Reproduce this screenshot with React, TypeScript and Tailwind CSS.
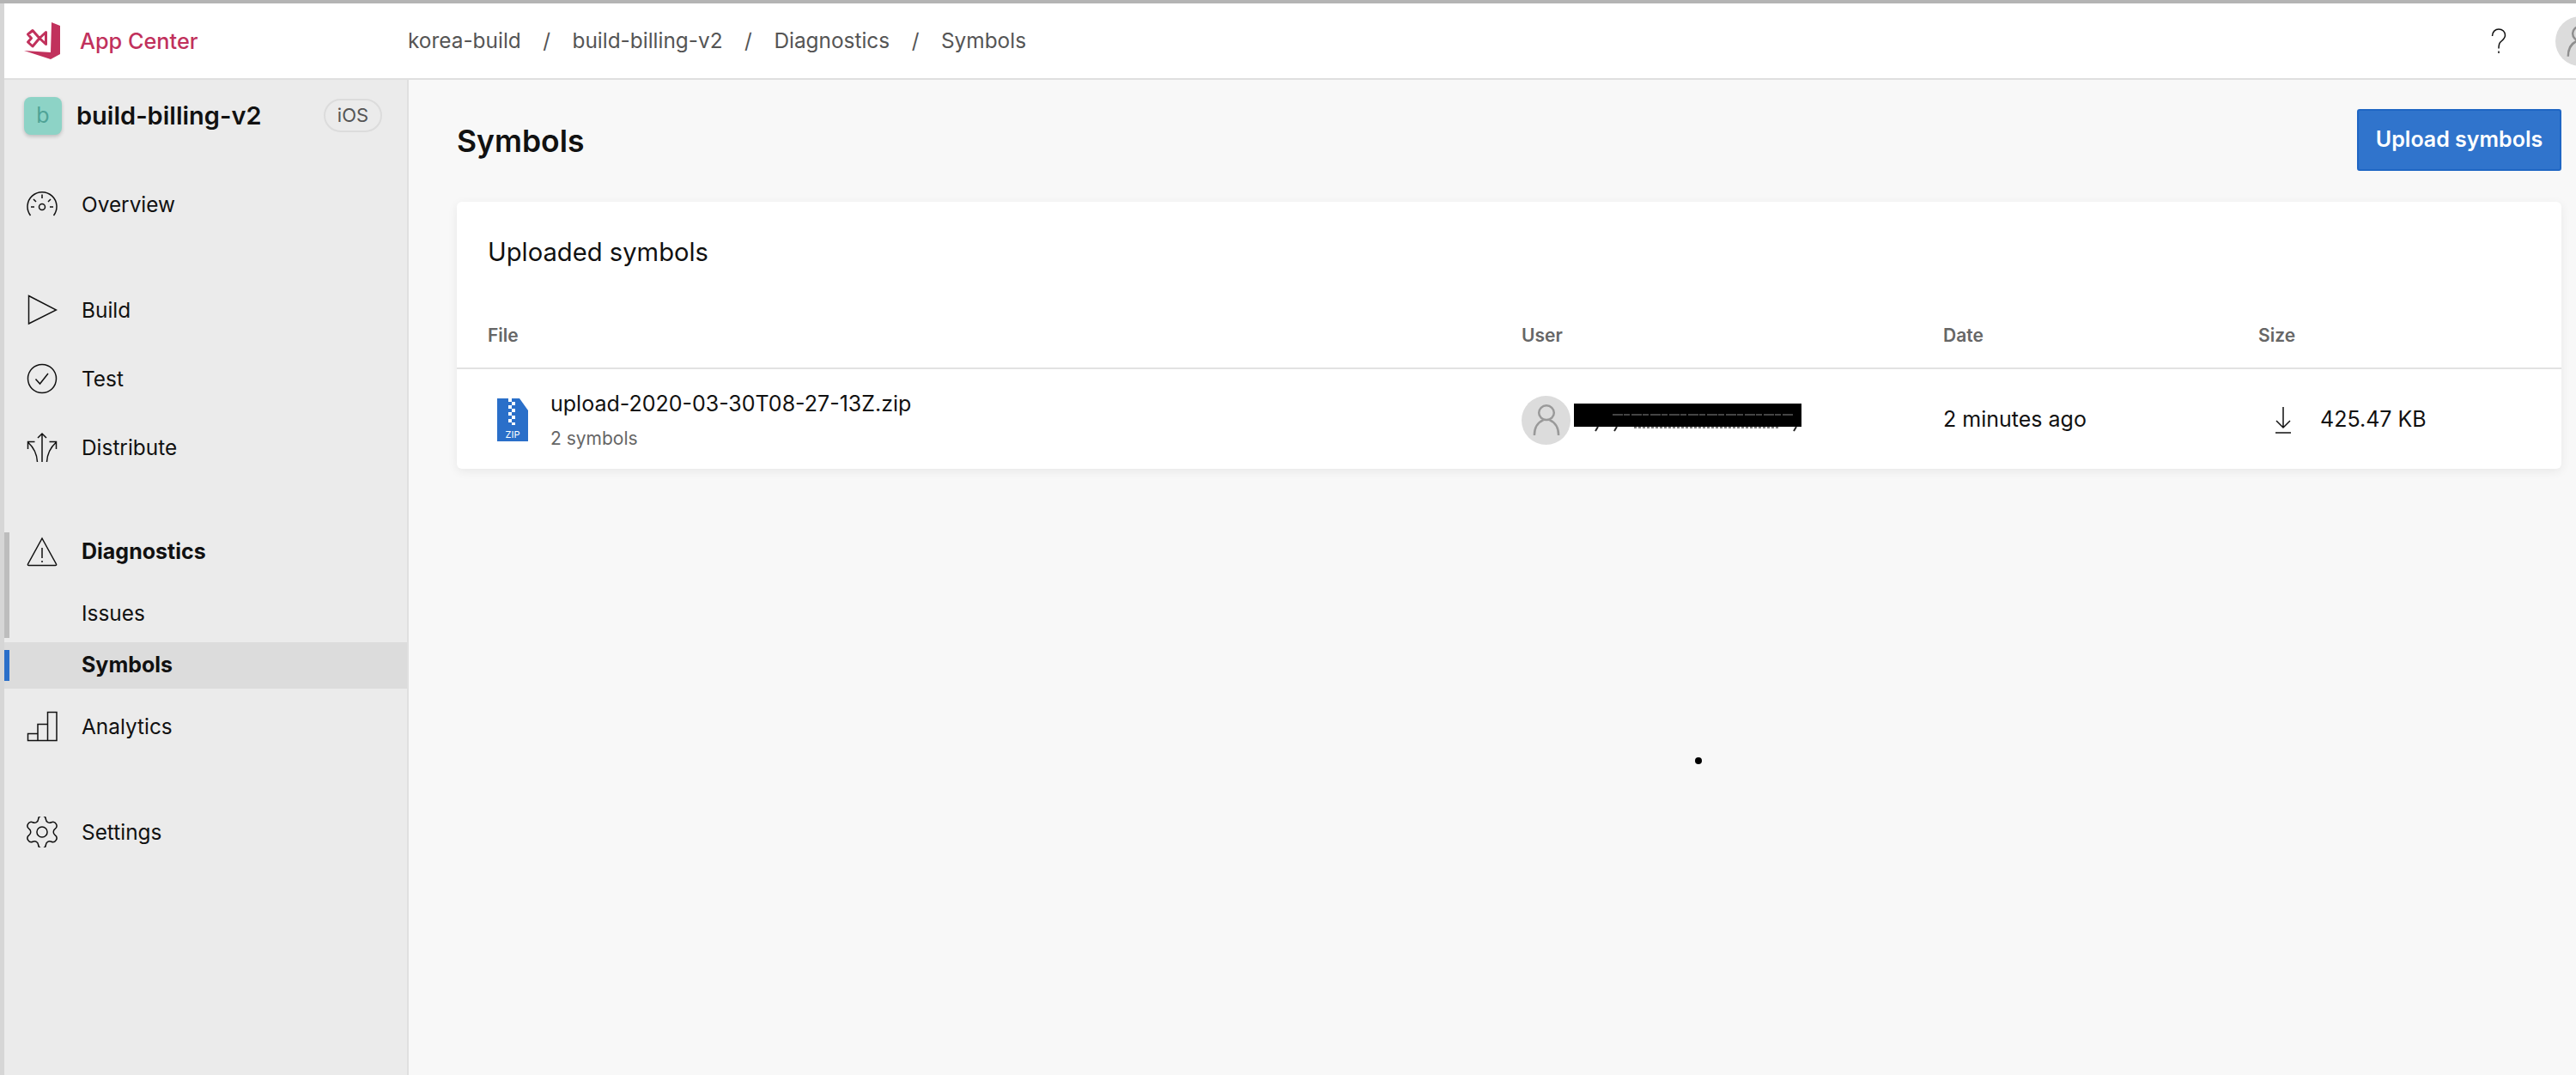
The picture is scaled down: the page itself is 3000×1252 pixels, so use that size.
import React from "react";

const ico = "w-[36px] h-[36px] shrink-0 text-[#111]";

const GaugeIcon = () => (
  <svg viewBox="0 0 36 36" fill="none" stroke="currentColor" strokeWidth="1.5" className={ico}>
    <path d="M4.500 31A17 17 0 1 1 31.500 31" />
    <circle cx="18" cy="21" r="3.500" />
    <path d="M18 6.500v4.500M5 21h4M27 21h4M8 12l3 3M28 12l-3 3" />
  </svg>
);

const PlayIcon = () => (
  <svg viewBox="0 0 36 36" fill="none" stroke="currentColor" strokeWidth="1.500" className={ico}>
    <path d="M2.500 1.500 L34.500 18 L2.500 34 Z" />
  </svg>
);

const CheckIcon = () => (
  <svg viewBox="0 0 36 36" fill="none" stroke="currentColor" strokeWidth="1.500" className={ico}>
    <circle cx="18" cy="18" r="16.500" />
    <path d="M10.500 18.500 L15.500 24 L25 12" />
  </svg>
);

const DistributeIcon = () => (
  <svg viewBox="0 0 36 36" fill="none" stroke="currentColor" strokeWidth="1.500" className={ico}>
    <path d="M18 35V2M13 7l5-5 5 5" />
    <path d="M12.500 35C12 25 7 17 1.500 12M1.500 20v-8.500h8" />
    <path d="M23.500 35C24 25 29 17 34.500 12M34.500 20v-8.500h-8" />
  </svg>
);

const WarningIcon = () => (
  <svg viewBox="0 0 36 36" fill="none" stroke="currentColor" strokeWidth="1.500" className={ico}>
    <path d="M18 2 L34.500 32 Q35 33.500 33.500 33.500 H2.500 Q1 33.500 1.500 32 Z" />
    <path d="M18 13v12M18 28v2" />
  </svg>
);

const BarsIcon = () => (
  <svg viewBox="0 0 36 36" fill="none" stroke="currentColor" strokeWidth="1.500" className={ico}>
    <path d="M1.500 26.500h11.500v8h-11.500zM13 15.500h11.500v19h-11.500zM24.500 1.500h10.500v33h-10.500z" />
  </svg>
);

const GearIcon = () => (
  <svg viewBox="2.500 2.500 19 19" fill="none" stroke="currentColor" strokeWidth="0.8" className={ico}>
    <path d="M9.671 4.136a2.34 2.34 0 0 1 4.659 0 2.34 2.34 0 0 0 3.319 1.915 2.34 2.34 0 0 1 2.33 4.033 2.34 2.34 0 0 0 0 3.831 2.34 2.34 0 0 1-2.33 4.033 2.34 2.34 0 0 0-3.319 1.915 2.34 2.34 0 0 1-4.659 0 2.34 2.34 0 0 0-3.32-1.915 2.34 2.34 0 0 1-2.33-4.033 2.34 2.34 0 0 0 0-3.831A2.34 2.34 0 0 1 6.35 6.051a2.34 2.34 0 0 0 3.319-1.915" />
    <circle cx="12" cy="12" r="3.200" />
  </svg>
);

const PersonIcon = ({ className }: { className: string }) => (
  <svg viewBox="0 0 36 42" fill="none" stroke="currentColor" strokeWidth="2.800" className={className}>
    <ellipse cx="18" cy="11" rx="10" ry="9.500" />
    <path d="M2 41 C2 29 8 23 14 20.500 M34 41 C34 29 28 23 22 20.500" />
  </svg>
);

const Logo = () => (
  <svg viewBox="0 0 44 44" className="w-[44px] h-[44px] text-[#c1315c]">
    <path fill="currentColor" d="M32 0 L42 4 V37 L31 43 L0 33 L31 35 Z" />
    <path
      fill="none"
      stroke="currentColor"
      strokeWidth="3"
      strokeLinejoin="round"
      d="M10 9.500 L4.500 14 L8.500 18.500 L4.500 23 L10 28 L18 18.500 Z M18 18.500 L25.500 11.500 V25.500 Z"
    />
  </svg>
);

const ZipIcon = () => (
  <svg viewBox="0 0 36 50" className="w-[36px] h-[50px] shrink-0">
    <path fill="#2a6fc9" d="M0 0 H26 L36 14 V50 H0 Z" />
    <path fill="#fff" d="M13 0h4v4h-4zM17 4h4v4h-4zM13 8h4v4h-4zM17 12h4v4h-4zM13 16h4v4h-4zM17 20h4v4h-4zM13 24h4v4h-4zM17 28h4v3h-4z" />
    <text x="18" y="46" textAnchor="middle" fontSize="11" fill="#fff" fontFamily="Inter, sans-serif">
      ZIP
    </text>
  </svg>
);

const Redaction = () => (
  <svg viewBox="0 0 265 33" className="w-[265px] h-[33px] shrink-0 mb-[5px]">
    <rect width="265" height="27" fill="#000" />
    <path stroke="#444" strokeWidth="2" strokeDasharray="12 1 7 2" d="M45 13H255" />
    <path fill="none" stroke="#222" strokeWidth="2" d="M28 27 L25 32 M50 27 L47 32 M259 27 L256 32" />
    <path stroke="#555" strokeWidth="1.500" strokeDasharray="3 2" d="M70 28H240" />
  </svg>
);

const NavRow = ({
  icon,
  label,
  className,
}: {
  icon: React.ReactNode;
  label: string;
  className: string;
}) => (
  <div className={`flex items-center gap-[28px] pl-[26px] ${className}`}>
    {icon}
    <span>{label}</span>
  </div>
);

const crumbs = ["korea-build", "build-billing-v2", "Diagnostics", "Symbols"];

export default function App() {
  return (
    <div className="relative w-[3000px] h-[1252px] overflow-hidden flex flex-col bg-[#f8f8f8] text-[#111] font-['Inter',sans-serif]">
      <div className="h-[4px] shrink-0 bg-[#b4b4b4]" />
      <div className="flex flex-1 min-h-0">
        <div className="w-[5px] shrink-0 bg-[#d6d6d6]" />
        <div className="flex-1 min-w-0 flex flex-col">
          <header className="h-[89px] shrink-0 flex items-center bg-white border-b-2 border-[#dfdfdf] overflow-hidden">
            <div className="w-[470px] shrink-0 flex items-center pl-[23px] gap-[21px]">
              <Logo />
              <span className="text-[25.3px] font-medium text-[#c1315c]">App Center</span>
            </div>
            <nav className="flex items-center text-[24.4px] text-[#555]">
              {crumbs.map((c, i) => (
                <React.Fragment key={c}>
                  {i > 0 && <span className="mx-[25.5px]">/</span>}
                  <span>{c}</span>
                </React.Fragment>
              ))}
            </nav>
            <div className="ml-auto flex items-center gap-[57px] -mr-[34px]">
              <svg viewBox="0 0 18 30" fill="none" stroke="#111" strokeWidth="1.500" className="w-[18px] h-[30px]">
                <path d="M1.500 9C1.500 4 5 1 9 1 C13.500 1 16.500 4 16.500 8 C16.500 12 13 14 11 16 C9.500 17.500 9 19 9 23.500M9 26.500v2.500" />
              </svg>
              <div className="w-[58px] h-[58px] rounded-full bg-[#dcdcdc] flex items-center justify-center">
                <PersonIcon className="w-[32px] h-[38px] text-[#8e8e8e]" />
              </div>
            </div>
          </header>
          <div className="flex flex-1 min-h-0">
            <aside className="w-[471px] shrink-0 bg-[#ebebeb] border-r-2 border-[#e0e0e0] text-[24.4px]">
              <div className="flex items-center h-[43px] mt-[20px] pl-[23px] pr-[29px]">
                <div className="w-[44px] h-[44px] rounded-[8px] bg-[#8dd3c6] shadow-[0_2px_4px_rgba(0,0,0,0.2)] flex items-center justify-center text-[#4fa396] text-[25px]">
                  b
                </div>
                <span className="ml-[17px] text-[29px] font-semibold">build-billing-v2</span>
                <span className="ml-auto w-[68px] h-[39px] rounded-full border-2 border-[#dcdcdc] flex items-center justify-center text-[22px] text-[#555]">
                  iOS
                </span>
              </div>
              <NavRow icon={<GaugeIcon />} label="Overview" className="h-[80px] mt-[42px]" />
              <NavRow icon={<PlayIcon />} label="Build" className="h-[80px] mt-[43px]" />
              <NavRow icon={<CheckIcon />} label="Test" className="h-[80px]" />
              <NavRow icon={<DistributeIcon />} label="Distribute" className="h-[80px]" />
              <div className="relative mt-[59px]">
                <div className="absolute left-0 top-0 w-[6px] h-[123px] bg-[#bdbdbd]" />
                <NavRow
                  icon={<WarningIcon />}
                  label="Diagnostics"
                  className="h-[46px] text-[25px] font-bold"
                />
                <div className="h-[54px] mt-[21px] flex items-center pl-[90px]">Issues</div>
                <div className="relative h-[54px] mt-[7px] flex items-center pl-[90px] text-[25px] font-bold bg-[#dcdcdc]">
                  <div className="absolute left-0 top-[9px] w-[6px] h-[36px] bg-[#2a6fc9]" />
                  Symbols
                </div>
              </div>
              <NavRow icon={<BarsIcon />} label="Analytics" className="h-[80px] mt-[4px]" />
              <NavRow icon={<GearIcon />} label="Settings" className="h-[80px] mt-[43px]" />
            </aside>
            <main className="flex-1 min-w-0 pl-[56px] pr-[17px]">
              <div className="flex items-center justify-between h-[72px] mt-[34px]">
                <h1 className="pt-[3px] text-[35.5px] font-semibold">Symbols</h1>
                <button className="w-[238px] h-[72px] rounded-[3px] border-2 border-[#1f66c4] bg-[#3074cc] text-white text-[25px] font-semibold">
                  Upload symbols
                </button>
              </div>
              <section className="mt-[36px] h-[311px] rounded-[6px] bg-white shadow-[0_3px_12px_rgba(0,0,0,0.07)]">
                <h2 className="h-[117px] pl-[36px] flex items-center text-[29.2px]">Uploaded symbols</h2>
                <div className="grid grid-cols-[1204px_491px_367px_1fr] h-[78px] pl-[36px] pt-[2px] items-center border-b-2 border-[#e2e2e2] text-[21px] font-semibold text-[#666]">
                  <span>File</span>
                  <span>User</span>
                  <span>Date</span>
                  <span>Size</span>
                </div>
                <div className="grid grid-cols-[1204px_491px_367px_1fr] h-[116px] pl-[36px] pt-[2px] items-center text-[25px]">
                  <div className="flex items-center gap-[26px] pl-[11px]">
                    <ZipIcon />
                    <div>
                      <div>upload-2020-03-30T08-27-13Z.zip</div>
                      <div className="mt-[5px] text-[21px] text-[#666]">2 symbols</div>
                    </div>
                  </div>
                  <div className="flex items-center gap-[4px]">
                    <div className="w-[57px] h-[57px] rounded-full bg-[#dcdcdc] flex items-center justify-center">
                      <PersonIcon className="w-[32px] h-[37px] text-[#999]" />
                    </div>
                    <Redaction />
                  </div>
                  <span>2 minutes ago</span>
                  <div className="flex items-center gap-[31px] pl-[17px]">
                    <svg viewBox="0 0 24 36" fill="none" stroke="#111" strokeWidth="1.500" className="w-[24px] h-[36px]">
                      <path d="M12 3v24M4 19l8 8 8-8M3 33h18" />
                    </svg>
                    <span>425.47 KB</span>
                  </div>
                </div>
              </section>
            </main>
          </div>
        </div>
      </div>
      <div className="absolute left-[1974px] top-[882px] w-[8px] h-[8px] rounded-full bg-black" />
    </div>
  );
}
